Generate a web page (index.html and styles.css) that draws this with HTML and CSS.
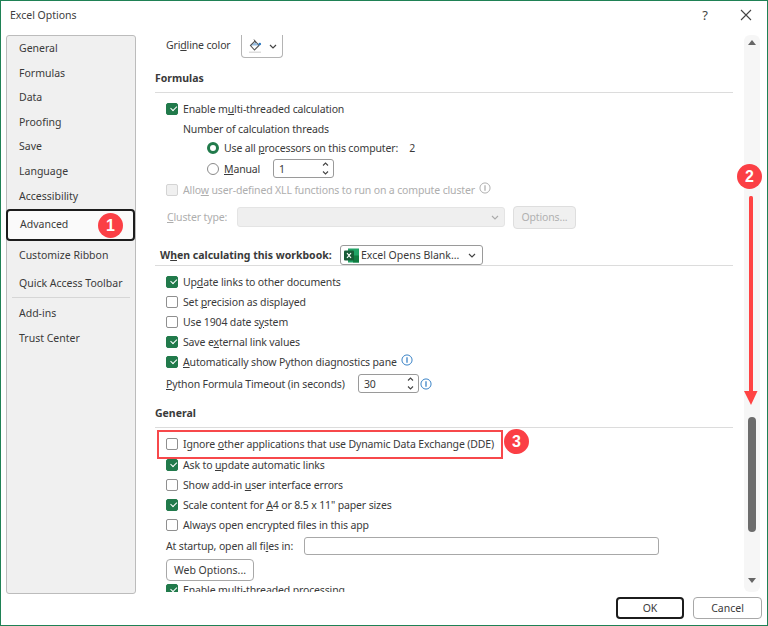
FILE: index.html
```html
<!DOCTYPE html>
<html lang="en">
<head>
<meta charset="utf-8">
<title>Excel Options</title>
<link rel="stylesheet" href="styles.css">
</head>
<body>
<div class="dialog">
  <header class="titlebar">
    <span class="title">Excel Options</span>
    <span class="help">?</span>
    <svg class="close" width="14" height="14" viewBox="0 0 14 14"><path d="M2 2L12 12M12 2L2 12" stroke="#444" stroke-width="1.1" fill="none"/></svg>
  </header>
  <div class="body">
    <nav class="sidebar">
      <div class="nav-item">General</div>
      <div class="nav-item">Formulas</div>
      <div class="nav-item">Data</div>
      <div class="nav-item">Proofing</div>
      <div class="nav-item">Save</div>
      <div class="nav-item">Language</div>
      <div class="nav-item">Accessibility</div>
      <div class="nav-item active">Advanced</div>
      <div class="nav-item tall">Customize Ribbon</div>
      <div class="nav-item tall">Quick Access Toolbar</div>
      <div class="nav-sep"></div>
      <div class="nav-item">Add-ins</div>
      <div class="nav-item">Trust Center</div>
    </nav>
    <main class="content">
      <div class="row grid-row">
        <span class="grid-label">Gri<u>d</u>line color</span>
        <span class="color-btn">
          <svg width="17" height="15" viewBox="0 0 17 15"><path d="M3.500 6.500L8 2L12 6.500L7.500 11Z" fill="none" stroke="#555" stroke-width="1.1"/><path d="M7 0.500L9 4" stroke="#555"/><path d="M8 3.500L12 6.500L4 6.500Z" fill="#2b79c2" opacity="0.5"/><circle cx="12.800" cy="5" r="1.300" fill="#2b79c2"/><rect x="2" y="12.500" width="12" height="1.500" fill="#ddd"/></svg>
          <svg class="chev" width="8" height="5" viewBox="0 0 8 5"><path d="M1 1L4 4L7 1" fill="none" stroke="#444" stroke-width="1.2"/></svg>
        </span>
      </div>
      <div class="heading first">Formulas</div>
      <div class="row check-row m6"><span class="cb on"></span><span>Enable m<u>u</u>lti-threaded calculation</span></div>
      <div class="row sub"><span>Number of calculation threads</span></div>
      <div class="row radio-row mn1"><span class="radio on"></span><span>Use all <u>p</u>rocessors on this computer:</span><span class="count">2</span></div>
      <div class="row radio-row m1"><span class="radio"></span><span class="manual-label"><u>M</u>anual</span>
        <span class="spin manual-spin"><span>1</span><svg class="arrows" width="9" height="15" viewBox="0 0 9 15"><path d="M2 4.500L4.500 2L7 4.500M2 10.500L4.500 13L7 10.500" fill="none" stroke="#444" stroke-width="1.100"/></svg></span>
      </div>
      <div class="row check-row m1 disabled"><span class="cb dis"></span><span>Allo<u>w</u> user-defined XLL functions to run on a compute cluster</span><svg class="info up" width="12" height="12" viewBox="0 0 13 13"><circle cx="6.500" cy="6.500" r="5.500" fill="none" stroke="#aaa"/><path d="M6.500 3.500V9.500" stroke="#aaa" stroke-width="1.300"/></svg></div>
      <div class="row cluster-row disabled">
        <span class="cluster-label"><u>C</u>luster type:</span>
        <span class="cluster-select"><svg width="8" height="5" viewBox="0 0 8 5"><path d="M1 1L4 4L7 1" fill="none" stroke="#aaa" stroke-width="1.100"/></svg></span>
        <span class="btn options-btn">Options...</span>
      </div>
      <div class="heading calc">
        <span class="calc-label">W<u>h</u>en calculating this workbook:</span>
        <span class="calc-select">
          <svg class="xl" width="16" height="15" viewBox="0 0 16 15"><rect x="4" y="0.500" width="11" height="14" fill="#21a366"/><rect x="9" y="7.500" width="6" height="7" fill="#107c41"/><rect x="0" y="2.500" width="10" height="10" rx="1" fill="#185c37"/><path d="M3 5L7 10M7 5L3 10" stroke="#fff" stroke-width="1.200"/></svg>
          <span class="calc-value">Excel Opens Blank...</span>
          <svg width="8" height="5" viewBox="0 0 8 5"><path d="M1 1L4 4L7 1" fill="none" stroke="#444" stroke-width="1.200"/></svg>
        </span>
      </div>
      <div class="row check-row m6"><span class="cb on"></span><span>Up<u>d</u>ate links to other documents</span></div>
      <div class="row check-row"><span class="cb"></span><span>Set <u>p</u>recision as displayed</span></div>
      <div class="row check-row"><span class="cb"></span><span>Use 1904 date s<u>y</u>stem</span></div>
      <div class="row check-row"><span class="cb on"></span><span>Save e<u>x</u>ternal link values</span></div>
      <div class="row check-row"><span class="cb on"></span><span><u>A</u>utomatically show Python diagnostics pane</span><svg class="info up" width="12" height="12" viewBox="0 0 13 13"><circle cx="6.500" cy="6.500" r="5.500" fill="none" stroke="#2b79c2"/><path d="M6.500 3.500V9.500" stroke="#2b79c2" stroke-width="1.300"/></svg></div>
      <div class="row plain-row m2"><span class="timeout-label"><u>P</u>ython Formula Timeout (in seconds)</span>
        <span class="spin timeout-spin"><span>30</span><svg class="arrows" width="9" height="15" viewBox="0 0 9 15"><path d="M2 4.500L4.500 2L7 4.500M2 10.500L4.500 13L7 10.500" fill="none" stroke="#444" stroke-width="1.100"/></svg></span>
        <svg class="info tight" width="12" height="12" viewBox="0 0 13 13"><circle cx="6.500" cy="6.500" r="5.500" fill="none" stroke="#2b79c2"/><path d="M6.500 3.500V9.500" stroke="#2b79c2" stroke-width="1.300"/></svg>
      </div>
      <div class="heading general">General</div>
      <div class="row check-row m6"><span class="cb"></span><span>Ignore <u>o</u>ther applications that use Dynamic Data Exchange (DDE)</span></div>
      <div class="row check-row m1"><span class="cb on"></span><span>Ask to <u>u</u>pdate automatic links</span></div>
      <div class="row check-row"><span class="cb"></span><span>Show add-in <u>u</u>ser interface errors</span></div>
      <div class="row check-row"><span class="cb on"></span><span>Scale content for <u>A</u>4 or 8.5 x 11" paper sizes</span></div>
      <div class="row check-row"><span class="cb"></span><span>Always open encrypted files in this app</span></div>
      <div class="row plain-row m1"><span class="startup-label">At startup, open all fi<u>l</u>es in:</span><span class="path-input"></span></div>
      <div class="web-row"><span class="btn web-btn">Web Options...</span></div>
      <div class="row check-row mn1 last-row"><span class="cb on"></span><span>Enable multi-threaded processing</span></div>
    </main>
    <div class="scrollbar">
      <span class="tri up-tri"></span>
      <span class="thumb"></span>
      <span class="tri down-tri"></span>
    </div>
  </div>
  <footer class="footer">
    <span class="btn ok">OK</span>
    <span class="btn cancel">Cancel</span>
  </footer>

  <span class="badge b1">1</span>
  <span class="badge b2">2</span>
  <span class="badge b3">3</span>
  <span class="red-box"></span>
  <svg class="red-arrow" width="14" height="210" viewBox="0 0 14 210"><rect x="5" y="0" width="4" height="198" rx="1.500" fill="#ff4343"/><path d="M0 195H13.500L7 209Z" fill="#ff4343"/></svg>
</div>
</body>
</html>
```

FILE: styles.css
```css
* { box-sizing: border-box; }
html, body { margin: 0; padding: 0; }
body {
  width: 768px;
  height: 626px;
  overflow: hidden;
  background: #fff;
  font-family: "Noto Sans", "Open Sans", sans-serif;
  font-size: 10.5px;
  color: #3a3a3a;
}
u { text-underline-offset: 1px; text-decoration-thickness: 1px; }

.dialog {
  position: relative;
  width: 768px;
  height: 626px;
  border: 1px solid #1f8155;
  background: #fff;
  display: flex;
  flex-direction: column;
}

/* Title bar */
.titlebar {
  height: 34px;
  display: flex;
  align-items: center;
  padding: 0 14px 7px 9px;
  flex: none;
}
.title { flex: 1; color: #404040; }
.help { font-size: 13px; margin-right: 31px; color: #444; }
.close { display: block; }

/* Body */
.body { display: flex; height: 558px; flex: none; }

.sidebar {
  width: 130px;
  margin-left: 5px;
  height: 559px;
  background: #f0f0f0;
  border: 1px solid #bcbcbc;
  border-radius: 3px;
  padding-top: 0;
  flex: none;
}
.nav-item {
  height: 24.6px;
  line-height: 24.6px;
  padding-left: 12px;
}
.nav-item.active {
  height: 32px;
  line-height: 27px;
  margin: 1px -1px 0 -1px;
  padding-left: 12px;
  width: 129px;
  background: #fafafa;
  border: 2px solid #1c1c1c;
  border-radius: 4px;
}
.nav-item.tall { height: 28px; line-height: 28px; }
.nav-sep { height: 1px; background: #d6d6d6; margin: 0 5px 3px 5px; }

.content {
  width: 589px;
  height: 557px;
  margin-left: 19px;
  overflow: hidden;
  flex: none;
}
.row {
  height: 20px;
  display: flex;
  align-items: center;
  white-space: nowrap;
  flex: none;
  padding-bottom: 1px;
  letter-spacing: -0.14px;
}
.m1 { margin-top: 1px; }
.m2 { margin-top: 2px; }
.m6 { margin-top: 6px; }
.mn1 { margin-top: -1px; }

.grid-row { height: 23px; padding-left: 11px; padding-bottom: 0; }
.grid-label { width: 75px; padding-bottom: 3px; }
.color-btn {
  width: 42px;
  height: 23px;
  border: 1px solid #b4b4b4;
  border-top: 0;
  border-radius: 0 0 4px 4px;
  display: flex;
  align-items: center;
  justify-content: center;
  gap: 5px;
}

.heading {
  width: 578px;
  border-bottom: 1px solid #dcdcdc;
  font-weight: 700;
  display: flex;
  align-items: center;
  flex: none;
  padding-bottom: 1px;
}
.heading.first { height: 29px; margin-top: 6px; }
.heading.general { height: 29px; margin-top: 5px; }
.heading.calc { height: 21px; margin-top: 18px; padding: 0 0 0 5px; align-items: flex-start; }
.calc-label { width: 180px; line-height: 20px; }
.calc-select {
  width: 143px;
  height: 20px;
  border: 1px solid #9a9a9a;
  border-radius: 3px;
  display: flex;
  align-items: center;
  padding: 0 6px 0 3px;
  font-weight: 400;
}
.calc-value { flex: 1; margin-left: 1px; }
.xl { flex: none; }

.check-row { padding-left: 11px; }
.cb {
  width: 12px;
  height: 12px;
  border: 1px solid #8f8f8f;
  border-radius: 2px;
  margin-right: 5px;
  flex: none;
  background: #fff;
  position: relative;
}
.cb.on { background: #217a4b; border-color: #217a4b; }
.cb.on::after {
  content: "";
  position: absolute;
  left: 2.500px;
  top: 1px;
  width: 5px;
  height: 3px;
  border-left: 1.500px solid #fff;
  border-bottom: 1.500px solid #fff;
  transform: rotate(-45deg) translateY(1px);
}
.cb.dis { background: #f0f0f0; border-color: #d4d4d4; }
.disabled { color: #aeaeae; }
.sub { padding-left: 28px; }
.radio-row { padding-left: 52px; }
.radio {
  width: 12px;
  height: 12px;
  border: 1px solid #8a8a8a;
  border-radius: 50%;
  margin-right: 5px;
  flex: none;
}
.radio.on { border: 3.500px solid #217a4b; }
.count { margin-left: 11px; }
.manual-label { width: 49px; }
.spin {
  height: 19px;
  border: 1px solid #9a9a9a;
  border-radius: 3px;
  display: flex;
  align-items: center;
  justify-content: space-between;
  padding: 0 3px 0 5px;
}
.manual-spin { width: 61px; }
.timeout-spin { width: 61px; }
.info { margin-left: 4px; flex: none; }
.info.up { margin-top: -3px; }
.info.tight { margin-left: 1px; }

.cluster-row { margin-top: 7px; padding-left: 12px; padding-bottom: 0; }
.cluster-label { width: 70px; }
.cluster-select {
  width: 268px;
  height: 20px;
  background: #efefef;
  border: 1px solid #e4e4e4;
  border-radius: 3px;
  display: flex;
  align-items: center;
  justify-content: flex-end;
  padding-right: 5px;
}
.btn {
  display: flex;
  align-items: center;
  justify-content: center;
  border: 1px solid #a8a8a8;
  border-radius: 4px;
  background: #fff;
  padding-bottom: 1px;
}
.options-btn {
  width: 63px;
  height: 23px;
  margin-left: 8px;
  background: #f0f0f0;
  border-color: #dedede;
  color: #b0b0b0;
}
.plain-row { padding-left: 11px; }
.timeout-label { width: 192px; }
.startup-label { width: 138px; }
.path-input {
  width: 355px;
  height: 18px;
  border: 1px solid #a8a8a8;
  border-radius: 3px;
}
.web-row { margin-top: 3px; padding-left: 11px; flex: none; }
.web-btn { width: 88px; height: 22px; }

/* Scrollbar */
.scrollbar {
  width: 16px;
  height: 557px;
  background: #f6f6f6;
  border-radius: 6px;
  display: flex;
  flex-direction: column;
  align-items: center;
  flex: none;
  position: relative;
}
.tri { width: 0; height: 0; border-left: 4.500px solid transparent; border-right: 4.500px solid transparent; flex: none; }
.up-tri { border-bottom: 5px solid #666; margin-top: 5px; }
.down-tri { border-top: 5px solid #666; margin-top: 46px; }
.thumb {
  width: 8px;
  height: 115px;
  background: #6c6c6c;
  border-radius: 4px;
  margin-top: 372px;
  flex: none;
}

/* Footer */
.footer {
  display: flex;
  justify-content: flex-end;
  gap: 9px;
  padding: 4px 5px 0 0;
  flex: 1;
}
.ok { width: 68px; height: 22px; border: 2px solid #1c1c1c; }
.cancel { width: 69px; height: 22px; }

/* Annotations */
.badge {
  position: absolute;
  width: 25px;
  height: 25px;
  border-radius: 50%;
  background: #fb3f45;
  color: #fff;
  font-family: "Liberation Sans", sans-serif;
  font-size: 16px;
  font-weight: 700;
  display: flex;
  align-items: center;
  justify-content: center;
}
.b1 { left: 97px; top: 212px; }
.b2 { left: 736px; top: 163px; }
.b3 { left: 503px; top: 428px; }
.red-box {
  position: absolute;
  left: 156px;
  top: 429px;
  width: 346px;
  height: 29px;
  border: 2px solid #f7484b;
}
.red-arrow { position: absolute; left: 743px; top: 195px; }
```
